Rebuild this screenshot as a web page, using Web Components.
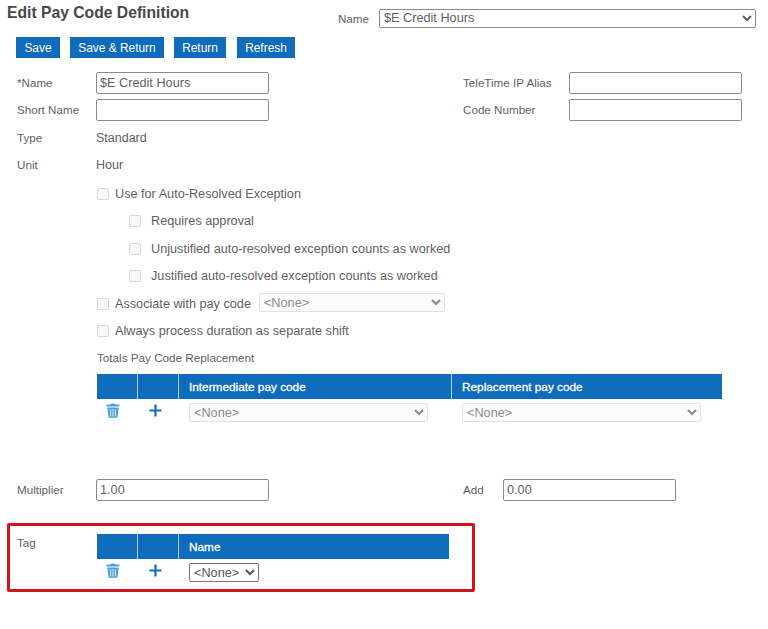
<!DOCTYPE html>
<html>
<head>
<meta charset="utf-8">
<title>Edit Pay Code Definition</title>
<style>
  html, body { margin: 0; padding: 0; background: #fff; }
  body { font-family: "Liberation Sans", Arial, sans-serif; font-size: 12px; color: #5f5f5f; }
</style>
</head>
<body>
<pay-code-page></pay-code-page>

<script>
const FONT = `"Liberation Sans", Arial, sans-serif`;
const TEXT = "#5f5f5f";
const BLUE = "#0f6cbd";

class PayButton extends HTMLElement {
  constructor() {
    super();
    this.attachShadow({ mode: "open" }).innerHTML = `
      <style>
        :host { display: inline-block; }
        button {
          display: block;
          height: 21px;
          width: var(--w);
          padding: 0;
          border: 0;
          background: ${BLUE};
          color: #fff;
          font: 11.9px ${FONT};
        }
      </style>
      <button><slot></slot></button>`;
  }
}

// label + control row: left pair and optional right pair
class FormRow extends HTMLElement {
  constructor() {
    super();
    this.attachShadow({ mode: "open" }).innerHTML = `
      <style>
        :host {
          display: grid;
          grid-template-columns: 79px 367px var(--right-label, 106px) auto;
          align-items: center;
          height: var(--h, 22px);
          padding-left: 17px;
          color: ${TEXT};
          font-size: 11.65px;
        }
        ::slotted(input) {
          box-sizing: border-box;
          width: 173px;
          height: 22px;
          margin: 0;
          padding: 0 3px;
          border: 1px solid #8a8a8a;
          border-radius: 2px;
          color: ${TEXT};
          font: 12.7px ${FONT};
        }
        ::slotted(.val) { font-size: 12.5px; }
        ::slotted([slot="label"]), ::slotted([slot="right-label"]) {
          margin-bottom: var(--label-lift, 2px);
        }
      </style>
      <slot name="label"></slot>
      <div><slot name="value"></slot></div>
      <slot name="right-label"></slot>
      <div><slot name="right-value"></slot></div>`;
  }
}

class CheckRow extends HTMLElement {
  constructor() {
    super();
    this.attachShadow({ mode: "open" }).innerHTML = `
      <style>
        :host {
          display: flex;
          align-items: center;
          height: var(--h, 27.5px);
          margin-left: var(--indent, 97px);
          color: ${TEXT};
          font-size: 12.68px;
        }
        .box {
          box-sizing: border-box;
          flex: none;
          width: 12px;
          height: 12px;
          border: 1px solid #d8d8d8;
          border-radius: 2px;
          background: #f8f8f8;
          margin-right: var(--gap, 6px);
        }
      </style>
      <span class="box"></span><slot></slot>`;
  }
}

const TRASH = `<svg width="14" height="15" viewBox="0 0 14 15">
  <path fill="#4a9fdb" d="M5 1.6 5.6.4h2.8L9 1.6h3.6c.5 0 .9.4.9 1v.9H.5v-.9c0-.6.4-1 .9-1zM1.4 4.5h11.2l-1 9.3c0 .5-.5 1-1 1H3.4c-.5 0-1-.5-1-1z"/>
  <path stroke="#dceefa" stroke-width="1" d="M4.6 6v7.5M7 6v7.5M9.4 6v7.5"/>
</svg>`;
const PLUS = `<svg width="13" height="13" viewBox="0 0 13 13">
  <path stroke="${BLUE}" stroke-width="2.2" d="M6.5.5v12M.5 6.5h12"/>
</svg>`;

class RowTable extends HTMLElement {
  constructor() {
    super();
    this.attachShadow({ mode: "open" }).innerHTML = `
      <style>
        :host { display: block; color: #fff; }
        .head, .body {
          display: grid;
          grid-template-columns: var(--cols);
          column-gap: 1px;
        }
        .head {
          height: 25px;
          background: #a9d3ef;
          font-size: 11.8px;
          -webkit-text-stroke: 0.3px #fff;
        }
        .head > div, .head ::slotted(div) {
          background: ${BLUE};
          display: flex;
          align-items: center;
          padding-left: 10px;
        }
        .body { height: 23px; align-items: center; margin-top: 2px; }
        .icon { display: flex; justify-content: center; padding-bottom: 4px; }
        .icon.trash { padding-right: 9px; }
        .icon.plus { padding-right: 5px; }
      </style>
      <div class="head"><div></div><div></div><slot name="head"></slot></div>
      <div class="body">
        <div class="icon trash">${TRASH}</div>
        <div class="icon plus">${PLUS}</div>
        <slot name="cell"></slot>
      </div>`;
  }
}

class PayCodePage extends HTMLElement {
  constructor() {
    super();
    this.attachShadow({ mode: "open" }).innerHTML = `
      <style>
        :host {
          display: block;
          width: 768px;
          height: 629px;
          overflow: hidden;
          font: 12px ${FONT};
          color: ${TEXT};
        }
        .top {
          display: flex;
          justify-content: space-between;
          height: 37px;
          box-sizing: border-box;
          padding: 4px 12px 0 7px;
        }
        h1 {
          margin: 0;
          font-size: 15.7px;
          line-height: 17px;
          font-weight: bold;
          color: #484848;
        }
        .picker { display: flex; align-items: center; height: 18px; margin-top: 5px; gap: 10px; font-size: 11.65px; }
        select {
          box-sizing: border-box;
          height: 19px;
          margin: 0;
          padding: 0;
          font: 12.7px ${FONT};
          color: ${TEXT};
          background: #fff;
          border: 1px solid #8a8a8a;
          border-radius: 2px;
        }
        .picker select { width: 377px; }
        .buttons { display: flex; gap: 10px; padding-left: 16px; height: 35px; }
        .rows { display: flex; flex-direction: column; gap: 5px; }
        .info { --h: 27px; --label-lift: 0px; }
        select[disabled] {
          color: #8c8c8c;
          border-color: #e2e2e2;
          background: #fbfbfb;
          opacity: 1;
        }
        .assoc select { width: 186px; margin: 0 0 2px 8px; }
        .subhead { margin: 3px 0 0 97px; height: 20px; line-height: 20px; font-size: 11.7px; }
        .totals { margin-left: 97px; width: 625px; --cols: 40px 40px 272px 1fr; }
        .totals select { width: 239px; margin-left: 10px; display: block; }
        .mult { margin-top: 55px; --right-label: 40px; }
        .tag-box {
          box-sizing: border-box;
          display: grid;
          grid-template-columns: 87px 352px;
          width: 468px;
          height: 69px;
          margin: 22px 0 0 7px;
          padding-top: 8px;
          border: 3px solid #d2141c;
          border-radius: 2px;
        }
        .tag-label { padding-left: 7px; margin-top: -1px; line-height: 20px; font-size: 11.65px; }
        .tag-table { --cols: 40px 40px 1fr; }
        .tag-table select { width: 70px; margin-left: 10px; border-color: #777; color: #555; display: block; }
      </style>

      <div class="top">
        <h1>Edit Pay Code Definition</h1>
        <div class="picker">
          <span>Name</span>
          <select><option>$E Credit Hours</option></select>
        </div>
      </div>

      <div class="buttons">
        <pay-button style="--w:44px">Save</pay-button>
        <pay-button style="--w:94px">Save &amp; Return</pay-button>
        <pay-button style="--w:52px">Return</pay-button>
        <pay-button style="--w:58px;margin-left:1px">Refresh</pay-button>
      </div>

      <div class="rows">
        <form-row>
          <span slot="label">*Name</span>
          <input slot="value" value="$E Credit Hours">
          <span slot="right-label">TeleTime IP Alias</span>
          <input slot="right-value">
        </form-row>
        <form-row>
          <span slot="label">Short Name</span>
          <input slot="value">
          <span slot="right-label">Code Number</span>
          <input slot="right-value">
        </form-row>
      </div>

      <form-row class="info" style="margin-top:3px"><span slot="label">Type</span><span class="val" slot="value">Standard</span></form-row>
      <form-row class="info"><span slot="label">Unit</span><span class="val" slot="value">Hour</span></form-row>

      <div style="height:2px"></div>
      <check-row>Use for Auto-Resolved Exception</check-row>
      <check-row style="--indent:129px;--gap:10px">Requires approval</check-row>
      <check-row style="--indent:129px;--gap:10px">Unjustified auto-resolved exception counts as worked</check-row>
      <check-row style="--indent:129px;--gap:10px">Justified auto-resolved exception counts as worked</check-row>
      <check-row class="assoc">Associate with pay code <select disabled><option>&lt;None&gt;</option></select></check-row>
      <check-row>Always process duration as separate shift</check-row>

      <div class="subhead">Totals Pay Code Replacement</div>

      <row-table class="totals" style="margin-top:6px">
        <div slot="head">Intermediate pay code</div>
        <div slot="head">Replacement pay code</div>
        <div slot="cell"><select disabled><option>&lt;None&gt;</option></select></div>
        <div slot="cell"><select disabled><option>&lt;None&gt;</option></select></div>
      </row-table>

      <form-row class="mult">
        <span slot="label">Multiplier</span>
        <input slot="value" value="1.00">
        <span slot="right-label">Add</span>
        <input slot="right-value" value="0.00">
      </form-row>

      <div class="tag-box">
        <div class="tag-label">Tag</div>
        <row-table class="tag-table">
          <div slot="head">Name</div>
          <div slot="cell"><select><option>&lt;None&gt;</option></select></div>
        </row-table>
      </div>`;
  }
}

customElements.define("pay-button", PayButton);
customElements.define("form-row", FormRow);
customElements.define("check-row", CheckRow);
customElements.define("row-table", RowTable);
customElements.define("pay-code-page", PayCodePage);
</script>
</body>
</html>
